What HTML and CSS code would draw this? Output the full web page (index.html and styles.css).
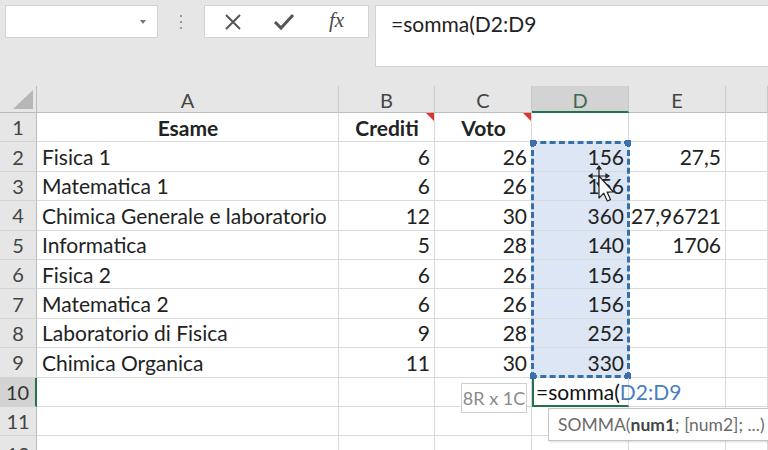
FILE: index.html
```html
<!DOCTYPE html>
<html lang="it">
<head>
<meta charset="utf-8">
<title>Excel</title>
<link rel="stylesheet" href="styles.css">
</head>
<body>
<div class="app">
  <div class="toolbar">
    <div class="namebox"><span class="caret"></span></div>
    <div class="grip"><i></i><i></i><i></i></div>
    <div class="fbuttons">
      <svg class="ic" width="20" height="20" viewBox="0 0 20 20"><path d="M3 3 L17 17 M17 3 L3 17" stroke="#555" stroke-width="2" fill="none"/></svg>
      <svg class="ic" width="22" height="20" viewBox="0 0 22 20"><path d="M2 10 L8 16 L20 3" stroke="#555" stroke-width="3" fill="none"/></svg>
      <span class="fx">fx</span>
    </div>
    <div class="formula">=somma(D2:D9</div>
  </div>
  <div class="sheet">
    <div class="hd corner"><span class="tri"></span></div>
    <div class="hd col">A</div>
    <div class="hd col">B</div>
    <div class="hd col">C</div>
    <div class="hd col cur">D</div>
    <div class="hd col">E</div>
    <div class="hd col"></div>

    <div class="hd row">1</div>
    <div class="c b ctr">Esame</div>
    <div class="c b ctr note">Crediti</div>
    <div class="c b ctr note">Voto</div>
    <div class="c"></div><div class="c"></div><div class="c"></div>

    <div class="hd row">2</div>
    <div class="c">Fisica 1</div><div class="c r">6</div><div class="c r">26</div><div class="c r sel">156</div><div class="c r">27,5</div><div class="c"></div>

    <div class="hd row">3</div>
    <div class="c">Matematica 1</div><div class="c r">6</div><div class="c r">26</div><div class="c r sel">156</div><div class="c"></div><div class="c"></div>

    <div class="hd row">4</div>
    <div class="c">Chimica Generale e laboratorio</div><div class="c r">12</div><div class="c r">30</div><div class="c r sel">360</div><div class="c r">27,96721</div><div class="c"></div>

    <div class="hd row">5</div>
    <div class="c">Informatica</div><div class="c r">5</div><div class="c r">28</div><div class="c r sel">140</div><div class="c r">1706</div><div class="c"></div>

    <div class="hd row">6</div>
    <div class="c">Fisica 2</div><div class="c r">6</div><div class="c r">26</div><div class="c r sel">156</div><div class="c"></div><div class="c"></div>

    <div class="hd row">7</div>
    <div class="c">Matematica 2</div><div class="c r">6</div><div class="c r">26</div><div class="c r sel">156</div><div class="c"></div><div class="c"></div>

    <div class="hd row">8</div>
    <div class="c">Laboratorio di Fisica</div><div class="c r">9</div><div class="c r">28</div><div class="c r sel">252</div><div class="c"></div><div class="c"></div>

    <div class="hd row">9</div>
    <div class="c">Chimica Organica</div><div class="c r">11</div><div class="c r">30</div><div class="c r sel">330</div><div class="c"></div><div class="c"></div>

    <div class="hd row cur">10</div>
    <div class="c"></div><div class="c"></div><div class="c"></div>
    <div class="c edit">=somma(<span class="ref">D2:D9</span></div>
    <div class="c"></div><div class="c"></div>

    <div class="hd row">11</div>
    <div class="c"></div><div class="c"></div><div class="c"></div><div class="c"></div><div class="c"></div><div class="c"></div>

    <div class="hd row last">12</div>
    <div class="c"></div><div class="c"></div><div class="c"></div><div class="c"></div><div class="c"></div><div class="c"></div>

    <div class="marquee"><i class="h tl"></i><i class="h tr"></i><i class="h bl"></i><i class="h br"></i></div>
    <div class="dim">8R x 1C</div>
    <div class="tip">SOMMA(<b>num1</b>; [num2]; ...)</div>
    <svg class="cursor" width="30" height="44" viewBox="0 0 30 44">
      <g stroke="#222" stroke-width="1.2" fill="#222">
        <path d="M14 3 L14 19 M6 11 L22 11" fill="none"/>
        <path d="M14 1 L12 4 L16 4 Z M14 21 L12 18 L16 18 Z M4 11 L7 9 L7 13 Z M24 11 L21 9 L21 13 Z"/>
      </g>
      <path d="M14 11 L14 33 L18.8 28.2 L22.3 36 L25.5 34.6 L22 27 L28.5 27 Z" fill="#fff" stroke="#222" stroke-width="1.2" stroke-linejoin="round"/>
    </svg>
  </div>
</div>
</body>
</html>
```
FILE: styles.css
```css
html, body {
  margin: 0;
  padding: 0;
  background: #e6e6e6;
  font-family: "Lato", "Liberation Sans", sans-serif;
  color: #222;
  overflow: hidden;
}
.app {
  width: 768px;
  height: 450px;
  overflow: hidden;
}
.toolbar {
  height: 86px;
  box-sizing: border-box;
  padding: 5px 0 0 5px;
  display: flex;
  align-items: flex-start;
  background: #e6e6e6;
}
.namebox {
  width: 153px;
  height: 33px;
  box-sizing: border-box;
  background: #fff;
  border: 1px solid #d2d2d2;
  position: relative;
}
.caret {
  position: absolute;
  right: 11px;
  top: 14px;
  border-left: 3.5px solid transparent;
  border-right: 3.5px solid transparent;
  border-top: 4px solid #777;
}
.grip {
  width: 46px;
  height: 33px;
  display: flex;
  flex-direction: column;
  align-items: center;
  justify-content: center;
  gap: 4px;
}
.grip i {
  width: 2px;
  height: 2px;
  background: #9a9a9a;
  display: block;
}
.fbuttons {
  width: 165px;
  height: 33px;
  box-sizing: border-box;
  background: #fff;
  border: 1px solid #d2d2d2;
  display: flex;
  align-items: center;
  padding-left: 18px;
  gap: 30px;
}
.ic { display: block; }
.fx {
  font-family: "Liberation Serif", serif;
  font-style: italic;
  font-size: 21px;
  color: #4a4a4a;
  margin-left: 4px;
  margin-top: -2px;
}
.formula {
  flex: 1;
  margin-left: 6px;
  height: 62px;
  box-sizing: border-box;
  background: #fff;
  border: 1px solid #d2d2d2;
  border-right: none;
  padding: 5px 0 0 15px;
  font-size: 21px;
  color: #222;
}
.sheet {
  position: relative;
  display: grid;
  grid-template-columns: 37px 302px 96px 97px 97px 97px 1fr;
  grid-template-rows: 27px repeat(12, 29.4px);
  background: #fff;
  font-size: 21px;
}
.hd {
  background: #e6e6e6;
  color: #444;
  box-sizing: border-box;
  display: flex;
  align-items: center;
  justify-content: center;
  font-size: 20px;
}
.col {
  border-bottom: 1px solid #bcbcbc;
  border-right: 1px solid #c9c9c9;
  padding-top: 2px;
}
.col.cur {
  background: #d3d3d3;
  color: #3d6a52;
  border-bottom: 2px solid #21734a;
  padding-top: 3px;
}
.corner {
  border-bottom: 1px solid #bcbcbc;
  border-right: 1px solid #bcbcbc;
  position: relative;
}
.tri {
  position: absolute;
  right: 3px;
  bottom: 3px;
  width: 0;
  height: 0;
  border-left: 20px solid transparent;
  border-bottom: 19px solid #b6b6b6;
}
.row {
  border-right: 1px solid #bcbcbc;
  border-bottom: 1px solid #d2d2d2;
}
.row.last { align-items: flex-start; padding-top: 6px; }
.row.cur {
  background: #d3d3d3;
  color: #333;
  border-right: 2px solid #21734a;
}
.c {
  box-sizing: border-box;
  border-right: 1px solid #dadada;
  border-bottom: 1px solid #dadada;
  padding: 0 4px 0 5px;
  display: flex;
  align-items: center;
  white-space: nowrap;
  color: #222;
  position: relative;
}
.c.r { justify-content: flex-end; }
.c.ctr { justify-content: center; }
.c.b { font-weight: 700; }
.c.sel { background: #dde6f4; }
.note::after {
  content: "";
  position: absolute;
  top: 0;
  right: 0;
  border-left: 8px solid transparent;
  border-top: 8px solid #e2312b;
}
.c.edit {
  border-left: 2px solid #21734a;
  border-bottom: 2px solid #21734a;
  padding-left: 2px;
  overflow: visible;
  z-index: 2;
  color: #111;
}
.ref { color: #4a7fbf; }
.marquee {
  position: absolute;
  left: 531px;
  top: 55px;
  width: 99px;
  height: 237px;
  box-sizing: border-box;
  border: 3px dashed #3570ad;
  pointer-events: none;
}
.h {
  position: absolute;
  width: 6px;
  height: 6px;
  background: #3b6fb0;
}
.h.tl { left: -4px; top: -4px; }
.h.tr { right: -4px; top: -4px; }
.h.bl { left: -4px; bottom: -4px; }
.h.br { right: -4px; bottom: -4px; }
.dim {
  position: absolute;
  left: 461px;
  top: 297px;
  width: 66px;
  height: 30px;
  box-sizing: border-box;
  background: #fff;
  border: 1px solid #cfcfcf;
  color: #8a8a8a;
  font-size: 18px;
  display: flex;
  align-items: center;
  justify-content: center;
  white-space: nowrap;
}
.tip {
  position: absolute;
  left: 548px;
  top: 322px;
  width: 220px;
  height: 33px;
  box-sizing: border-box;
  background: #fff;
  border: 1px solid #c4c4c4;
  border-right: none;
  box-shadow: 1px 1px 2px rgba(0,0,0,0.15);
  color: #6b6b6b;
  font-size: 17.5px;
  padding-left: 9px;
  display: flex;
  align-items: center;
  white-space: nowrap;
  z-index: 3;
}
.tip b { color: #444; }
.cursor {
  position: absolute;
  left: 585px;
  top: 79px;
  z-index: 4;
}
```
